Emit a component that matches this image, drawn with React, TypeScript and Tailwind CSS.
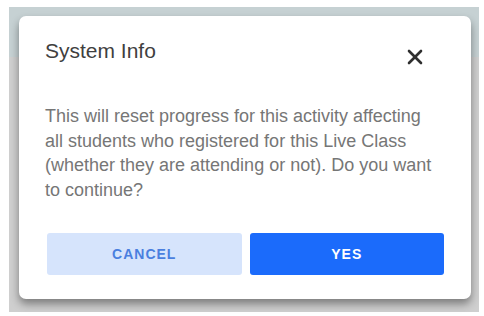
import React from "react";
import { X } from "lucide-react";

// ── Confirm dialog over a dimmed page ─────────────────────────────────────────
const FONT = { fontFamily: '"Liberation Sans", Arial, sans-serif' };

const ConfirmDialog: React.FC<{ onCancel?: () => void; onConfirm?: () => void }> = ({
  onCancel,
  onConfirm,
}) => (
  <div
    className="absolute left-[10px] top-[9px] w-[452px] h-[283px] bg-white rounded-[7px] shadow-[0_5px_9px_rgba(0,0,0,0.4)] px-[27px] pt-[23px] pb-[24px] flex flex-col"
    style={FONT}
  >
    {/* Header */}
    <div className="flex items-start justify-between">
      <h2 className="text-[21px] leading-[24px] text-[#3f3f3f] font-normal -ml-[1px]">
        System Info
      </h2>
      <button className="mt-[6px] mr-[17px] text-[#2f2f2f]" aria-label="Close">
        <X className="w-[24px] h-[24px]" strokeWidth={2.6} />
      </button>
    </div>

    {/* Body */}
    <p className="mt-[35px] text-[18px] leading-[24.5px] text-[#767676] -ml-[1px]">
      This will reset progress for this activity affecting
      <br />
      all students who registered for this Live Class
      <br />
      (whether they are attending or not). Do you want
      <br />
      to continue?
    </p>

    {/* Actions */}
    <div className="mt-auto grid grid-cols-2 gap-[8px] pl-[1px]">
      <button
        onClick={onCancel}
        className="h-[42px] rounded-[3px] bg-[#d6e4fc] text-[#4a7fdf] text-[14px] font-bold tracking-[1px]"
      >
        CANCEL
      </button>
      <button
        onClick={onConfirm}
        className="h-[42px] rounded-[3px] bg-[#1b6bfb] text-white text-[14px] font-bold tracking-[1px]"
      >
        YES
      </button>
    </div>
  </div>
);

export default function App() {
  return (
    <div className="w-[484px] h-[316px] bg-white pt-[7px] pl-[9px] pr-[5px] pb-[4px]">
      {/* dimmed page behind the dialog */}
      <div className="relative w-full h-full flex flex-col">
        <div className="h-[50px] bg-[#c6d1d3]" />
        <div className="flex-1 bg-[#cfcfcf]" />
        <ConfirmDialog />
      </div>
    </div>
  );
}
